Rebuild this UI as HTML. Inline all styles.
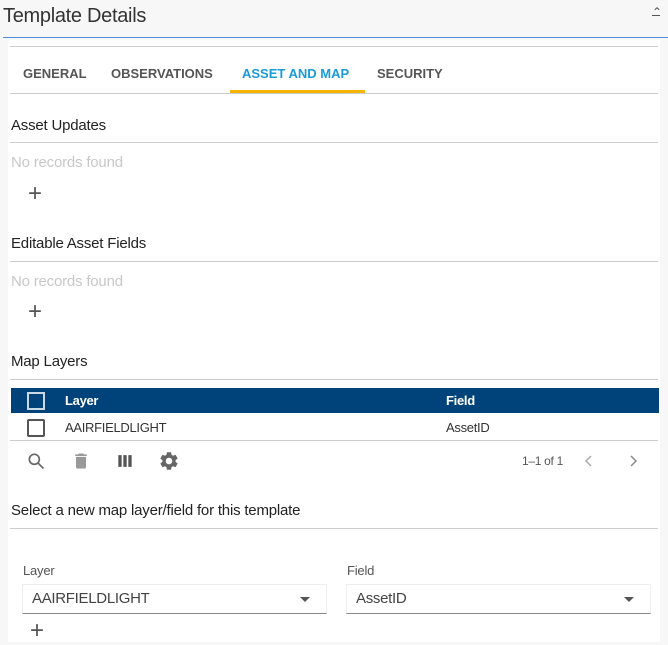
<!DOCTYPE html>
<html><head><style>
body{margin:0;width:668px;height:642px;overflow:hidden;background:#f7f7f7;font-family:"Liberation Sans",sans-serif;position:relative}
.a{position:absolute;white-space:nowrap}
.hl{position:absolute;height:1px;background:#ccc}
.h{font-size:15px;color:#222;letter-spacing:-.2px}
.nr{font-size:15px;color:#c8c8c8;letter-spacing:-.2px}
.plus{font-size:24px;color:#555;font-weight:300}
.tab{font-size:13px;font-weight:bold;color:#555;top:66px}
</style></head><body>
<div class="a" style="left:8px;top:40px;width:652px;height:602px;background:#fff"></div>
<div class="a" style="left:3px;top:5px;font-size:20px;color:#333;letter-spacing:-.3px">Template Details</div>
<div class="a" style="left:652px;top:5px;font-size:12px;color:#555">&#8963;</div>
<div class="a" style="left:652px;top:15px;width:8px;height:1px;background:#555"></div>
<div class="hl" style="left:3px;top:37px;width:665px;background:#4a90d9"></div>
<div class="hl" style="left:10px;top:46px;width:648px"></div>
<div class="a tab" style="left:23px">GENERAL</div>
<div class="a tab" style="left:111px">OBSERVATIONS</div>
<div class="a tab" style="left:242px;color:#1a9bd7">ASSET AND MAP</div>
<div class="a tab" style="left:377px">SECURITY</div>
<div class="a" style="left:230px;top:90px;width:135px;height:3px;background:#f7b500"></div>
<div class="hl" style="left:10px;top:93px;width:648px"></div>

<div class="a h" style="left:11px;top:117px">Asset Updates</div>
<div class="hl" style="left:10px;top:142px;width:648px"></div>
<div class="a nr" style="left:11px;top:154px">No records found</div>
<div class="a plus" style="left:28px;top:180px">+</div>

<div class="a h" style="left:11px;top:235px">Editable Asset Fields</div>
<div class="hl" style="left:10px;top:261px;width:648px"></div>
<div class="a nr" style="left:11px;top:273px">No records found</div>
<div class="a plus" style="left:28px;top:298px">+</div>

<div class="a h" style="left:11px;top:353px">Map Layers</div>
<div class="hl" style="left:10px;top:379px;width:648px"></div>
<div class="a" style="left:11px;top:388px;width:648px;height:25px;background:#00437a"></div>
<div class="a" style="left:27px;top:392px;width:14px;height:14px;border:2px solid #fff;opacity:.8"></div>
<div class="a" style="left:65px;top:393px;font-size:13px;font-weight:bold;color:#fff;letter-spacing:-.3px">Layer</div>
<div class="a" style="left:446px;top:393px;font-size:13px;font-weight:bold;color:#fff;letter-spacing:-.3px">Field</div>
<div class="a" style="left:27px;top:419px;width:14px;height:14px;border:2px solid #555;border-radius:2px"></div>
<div class="a" style="left:65px;top:420px;font-size:13px;color:#333;letter-spacing:-.3px">AAIRFIELDLIGHT</div>
<div class="a" style="left:446px;top:420px;font-size:13px;color:#333;letter-spacing:-.3px">AssetID</div>
<div class="hl" style="left:10px;top:440px;width:648px"></div>
<svg class="a" style="left:26px;top:451px" width="20" height="20" viewBox="0 0 24 24"><circle cx="10" cy="10" r="6" fill="none" stroke="#666" stroke-width="2"/><path d="M14.5 14.5L21 21" stroke="#666" stroke-width="2"/></svg>
<svg class="a" style="left:71px;top:451px" width="20" height="20" viewBox="0 0 24 24"><path d="M6 19a2 2 0 0 0 2 2h8a2 2 0 0 0 2-2V7H6zM19 4h-3.5l-1-1h-5l-1 1H5v2h14z" fill="#999"/></svg>
<svg class="a" style="left:115px;top:451px" width="20" height="20" viewBox="0 0 24 24"><path d="M4 5h4v14H4zM10 5h4v14h-4zM16 5h4v14h-4z" fill="#555"/></svg>
<svg class="a" style="left:158px;top:450px" width="22" height="22" viewBox="0 0 24 24"><path fill="#666" d="M19.14 12.94c.04-.3.06-.61.06-.94s-.02-.64-.07-.94l2.03-1.58a.49.49 0 0 0 .12-.61l-1.920-3.32a.49.49 0 0 0-.59-.22l-2.39.96c-.5-.38-1.03-.7-1.62-.94l-.36-2.54a.48.48 0 0 0-.48-.41h-3.84c-.24 0-.43.17-.47.41l-.36 2.54c-.59.24-1.13.57-1.62.94l-2.39-.96a.49.49 0 0 0-.59.22L2.74 8.87a.47.47 0 0 0 .12.61l2.03 1.58c-.05.3-.09.63-.09.94s.02.64.07.94l-2.03 1.58a.49.49 0 0 0-.12.61l1.92 3.32c.12.22.37.29.59.22l2.39-.96c.5.38 1.03.7 1.62.94l.36 2.54c.05.24.24.41.48.41h3.84c.24 0 .44-.17.47-.41l.36-2.54c.59-.24 1.130-.56 1.62-.94l2.39.96c.22.08.47 0 .59-.22l1.92-3.32c.12-.22.07-.47-.12-.61zM12 15.6A3.6 3.6 0 1 1 12 8.4a3.6 3.6 0 0 1 0 7.2z"/></svg>
<div class="a" style="left:522px;top:454px;font-size:12px;color:#555;letter-spacing:-.3px">1–1 of 1</div>
<svg class="a" style="left:583px;top:453px" width="12" height="16" viewBox="0 0 12 16"><path d="M8 3L3 8l5 5" fill="none" stroke="#aaa" stroke-width="1.5"/></svg>
<svg class="a" style="left:627px;top:453px" width="12" height="16" viewBox="0 0 12 16"><path d="M4 3l5 5-5 5" fill="none" stroke="#888" stroke-width="1.5"/></svg>

<div class="a h" style="left:11px;top:502px">Select a new map layer/field for this template</div>
<div class="hl" style="left:10px;top:528px;width:648px"></div>
<div class="a" style="left:23px;top:563px;font-size:13px;color:#555;letter-spacing:-.2px">Layer</div>
<div class="a" style="left:347px;top:563px;font-size:13px;color:#555;letter-spacing:-.2px">Field</div>
<div class="a" style="left:22px;top:584px;width:303px;height:28px;border:1px solid #eee;border-bottom:1px solid #888"></div>
<div class="a" style="left:346px;top:584px;width:303px;height:28px;border:1px solid #eee;border-bottom:1px solid #888"></div>
<div class="a" style="left:32px;top:590px;font-size:15px;color:#444;letter-spacing:-.3px">AAIRFIELDLIGHT</div>
<div class="a" style="left:356px;top:590px;font-size:15px;color:#444;letter-spacing:-.3px">AssetID</div>
<div class="a" style="left:300px;top:597px;border:5px solid transparent;border-top:5px solid #555;border-bottom:0"></div>
<div class="a" style="left:624px;top:597px;border:5px solid transparent;border-top:5px solid #555;border-bottom:0"></div>
<div class="a plus" style="left:30px;top:617px">+</div>
</body></html>
